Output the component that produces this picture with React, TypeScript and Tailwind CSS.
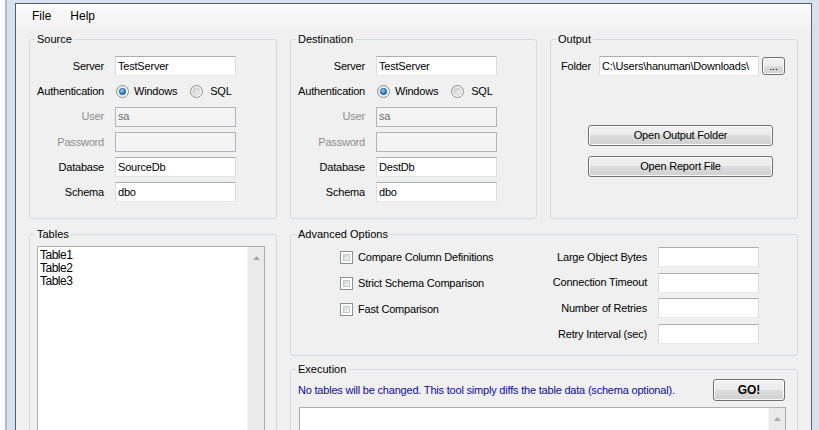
import React from "react";

function Group({ title, className = "", children }: { title: string; className?: string; children?: React.ReactNode }) {
  return (
    <fieldset className={`rounded-[3px] border border-[#d3dbe1] p-0 ${className}`}>
      <legend className="ml-[5px] px-[2px] text-[11px] leading-[14px] text-black">{title}</legend>
      {children}
    </fieldset>
  );
}

function TextBox({ value = "", disabled = false, className = "" }: { value?: string; disabled?: boolean; className?: string }) {
  return (
    <div
      className={`flex h-[20px] items-center border px-[2px] text-[11px] ${
        disabled
          ? "border-[#afb4b8] bg-[#f4f4f4] text-[#6d6d6d]"
          : "border-[#abadb3] border-x-[#dadde3] border-b-[#e3e9ef] bg-white text-black"
      } ${className}`}
    >
      {value}
    </div>
  );
}

function Radio({ checked }: { checked?: boolean }) {
  return (
    <svg width="13" height="13" viewBox="0 0 13 13">
      <defs>
        <linearGradient id="rOuter" x1="0" y1="0" x2="1" y2="1">
          <stop offset="0" stopColor="#e4e4e4" />
          <stop offset="1" stopColor="#ffffff" />
        </linearGradient>
        <linearGradient id="rOff" x1="0" y1="0" x2="1" y2="1">
          <stop offset="0" stopColor="#cbcbcb" />
          <stop offset="1" stopColor="#f6f6f6" />
        </linearGradient>
        <radialGradient id="rOn" cx="0.4" cy="0.35" r="0.7">
          <stop offset="0" stopColor="#9bd6fb" />
          <stop offset="0.6" stopColor="#2e8ad3" />
          <stop offset="1" stopColor="#15508f" />
        </radialGradient>
      </defs>
      <circle cx="6.5" cy="6.5" r="6" fill="url(#rOuter)" stroke="#8f8f8f" strokeWidth="1" />
      {checked ? (
        <circle cx="6.5" cy="6.5" r="3.2" fill="url(#rOn)" stroke="#1d4f82" strokeWidth="0.6" />
      ) : (
        <circle cx="6.5" cy="6.5" r="3.6" fill="url(#rOff)" stroke="#c2c2c2" strokeWidth="0.6" />
      )}
    </svg>
  );
}

function CheckBox() {
  return (
    <div className="h-[13px] w-[13px] shrink-0 border border-[#8e8f8f] bg-white p-[2px]">
      <div className="h-full w-full border border-[#c3c6ca] bg-[linear-gradient(135deg,#d0d3d7,#f5f5f5)]" />
    </div>
  );
}

function Button({ children, className = "" }: { children: React.ReactNode; className?: string }) {
  return (
    <div
      className={`flex items-center justify-center rounded-[3px] border border-[#707070] bg-[linear-gradient(to_bottom,#f2f2f2_0%,#ebebeb_50%,#dddddd_50%,#cfcfcf_100%)] text-[11px] text-black shadow-[inset_0_0_0_1px_#fbfbfb] ${className}`}
    >
      {children}
    </div>
  );
}

function ScrollBar() {
  return (
    <div className="flex w-[17px] shrink-0 justify-center border-l border-[#f4f4f4] bg-[#eaeaea] pt-[9px]">
      <svg width="7" height="4" viewBox="0 0 7 4">
        <path d="M0 4 L3.5 0 L7 4 Z" fill="#a7a7a7" />
      </svg>
    </div>
  );
}

function ConnectionGroup({ title, width, database }: { title: string; width: string; database: string }) {
  const label = "text-right";
  return (
    <Group title={title} className={`h-[187px] ${width}`}>
      <div className="grid grid-cols-[74px_121px] gap-x-[11px] gap-y-[5.25px] pt-[10px] text-[11px] tracking-[-0.2px]">
        <div className={`${label} self-center`}>Server</div>
        <TextBox value="TestServer" />
        <div className={`${label} self-center`}>Authentication</div>
        <div className="flex h-[20px] items-center">
          <span className="ml-[1px]"><Radio checked /></span>
          <span className="ml-[5px]">Windows</span>
          <span className="ml-[13px]"><Radio /></span>
          <span className="ml-[7px]">SQL</span>
        </div>
        <div className={`${label} self-center text-[#8d8d8d]`}>User</div>
        <TextBox value="sa" disabled />
        <div className={`${label} self-center text-[#8d8d8d]`}>Password</div>
        <TextBox disabled />
        <div className={`${label} self-center`}>Database</div>
        <TextBox value={database} />
        <div className={`${label} self-center`}>Schema</div>
        <TextBox value="dbo" />
      </div>
    </Group>
  );
}

export default function App() {
  return (
    <div className="flex h-[430px] w-[819px] overflow-hidden bg-white font-['Liberation_Sans',Arial,sans-serif] text-black">
      {/* desktop behind the window */}
      <div className="w-[5px] bg-[#fbfbfb]" />
      <div className="w-[2px] bg-[#b3bcc8]" />
      {/* window frame */}
      <div className="flex-1 bg-[#d8e2ee] pl-[8px] pr-[7px] pt-[3px]">
        <div className="h-full overflow-hidden border-x border-t border-[#56606c] bg-[#f0f0f0]">
          {/* menu bar */}
          <div className="flex h-[24px] items-center bg-[linear-gradient(to_bottom,#fbfbfb,#f3f3f3)] text-[12px]">
            <span className="ml-[16px]">File</span>
            <span className="ml-[19px]">Help</span>
          </div>

          <div className="pl-[13px] pt-[4px]">
            {/* top row */}
            <div className="flex gap-[13px]">
              <ConnectionGroup title="Source" width="w-[248px]" database="SourceDb" />
              <ConnectionGroup title="Destination" width="w-[247px]" database="DestDb" />
              <Group title="Output" className="h-[187px] w-[248px]">
                <div className="flex items-center pl-[10px] pt-[10px] text-[11px] tracking-[-0.2px]">
                  <span className="w-[38px]">Folder</span>
                  <TextBox value="C:\Users\hanuman\Downloads\" className="w-[160px] overflow-hidden whitespace-nowrap" />
                  <Button className="ml-[3px] h-[18px] w-[23px] items-end pb-[2px] leading-none">...</Button>
                </div>
                <div className="ml-[37px] mt-[49px] flex flex-col gap-[10px] text-[11px] tracking-[-0.2px]">
                  <Button className="h-[21px] w-[185px]">Open Output Folder</Button>
                  <Button className="h-[21px] w-[185px]">Open Report File</Button>
                </div>
              </Group>
            </div>

            {/* bottom row */}
            <div className="mt-[8px] flex gap-[13px]">
              <Group title="Tables" className="h-[230px] w-[248px]">
                <div className="ml-[7px] mt-[5px] flex h-[200px] w-[228px] border border-[#abadb3] border-b-[#e3e9ef] bg-white">
                  <div className="flex-1 pl-[2px] pt-[2px] text-[12px] leading-[13px] tracking-[-0.5px]">
                    <div>Table1</div>
                    <div>Table2</div>
                    <div>Table3</div>
                  </div>
                  <ScrollBar />
                </div>
              </Group>

              <div className="w-[508px]">
                <Group title="Advanced Options" className="h-[129px] w-full">
                  <div className="flex pt-[6px] text-[11px] tracking-[-0.2px]">
                    <div className="ml-[49px] flex flex-col gap-[6px]">
                      {["Compare Column Definitions", "Strict Schema Comparison", "Fast Comparison"].map((t) => (
                        <div key={t} className="flex h-[20px] items-center gap-[5px]">
                          <CheckBox />
                          <span>{t}</span>
                        </div>
                      ))}
                    </div>
                    <div className="ml-auto mr-[38px] grid grid-cols-[auto_101px] gap-x-[11px] gap-y-[5.7px]">
                      {["Large Object Bytes", "Connection Timeout", "Number of Retries", "Retry Interval (sec)"].map((t) => (
                        <React.Fragment key={t}>
                          <div className="self-center text-right">{t}</div>
                          <TextBox />
                        </React.Fragment>
                      ))}
                    </div>
                  </div>
                </Group>

                <Group title="Execution" className="mt-[6px] h-[100px] w-full">
                  <div className="flex items-center justify-between pl-[7px] pr-[12px] pt-[3px]">
                    <span className="text-[11px] tracking-[-0.2px] text-[#0c0c94]">
                      No tables will be changed. This tool simply diffs the table data (schema optional).
                    </span>
                    <Button className="h-[22px] w-[72px] text-[12px] font-bold">GO!</Button>
                  </div>
                  <div className="ml-[8px] mr-[11px] mt-[6px] flex h-[60px] border border-[#abadb3] border-b-[#e3e9ef] bg-white">
                    <div className="flex-1" />
                    <ScrollBar />
                  </div>
                </Group>
              </div>
            </div>
          </div>
        </div>
      </div>
    </div>
  );
}
